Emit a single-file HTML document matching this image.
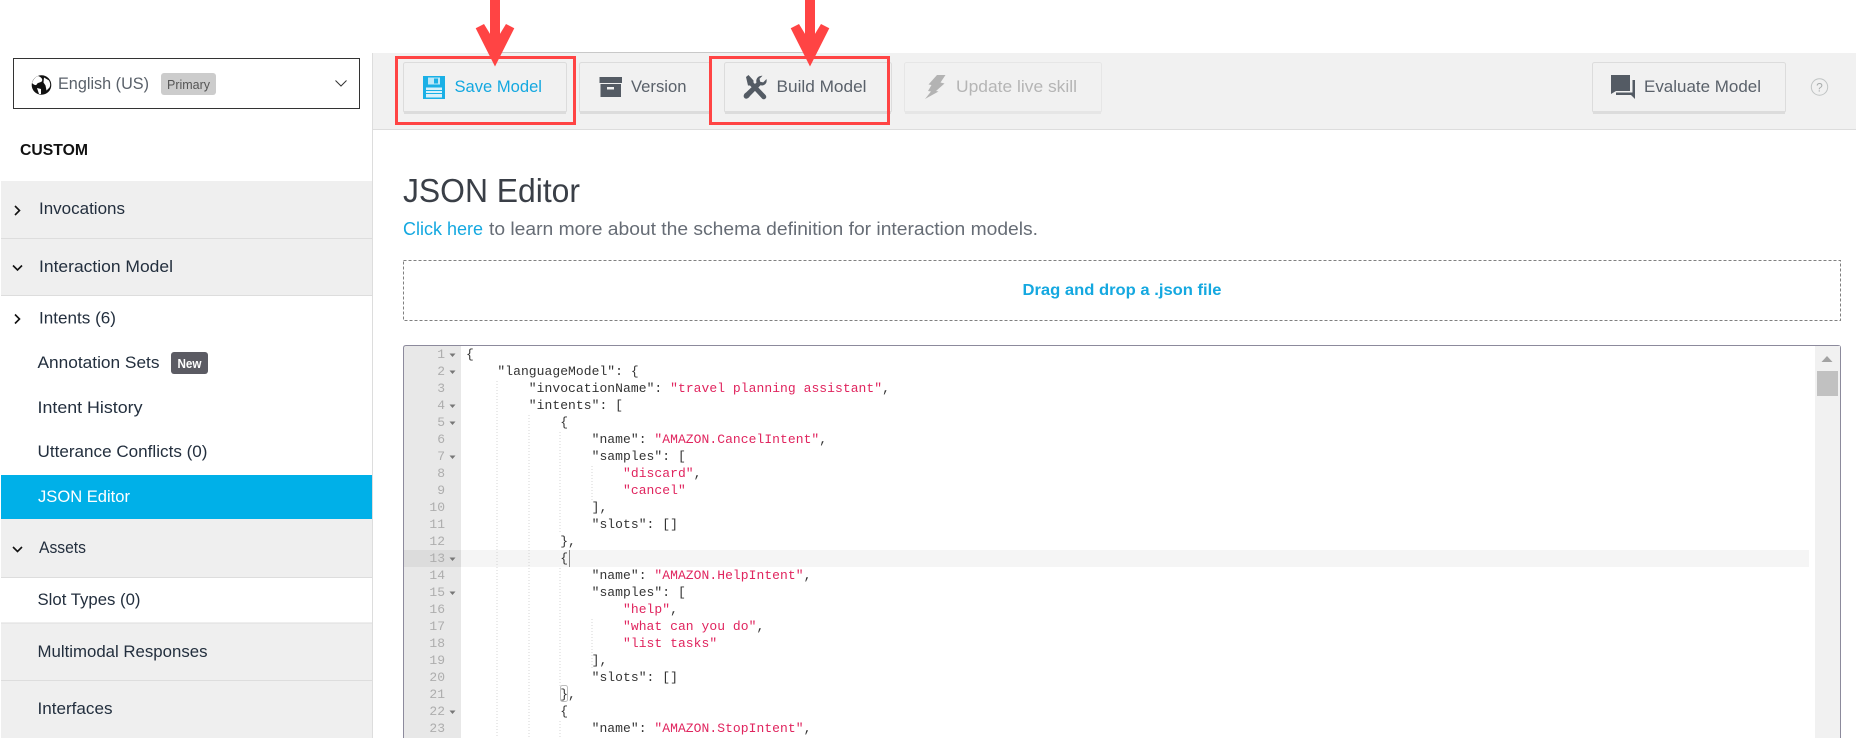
<!DOCTYPE html>
<html lang="en"><head><meta charset="utf-8"><title>JSON Editor</title>
<style>
html,body{margin:0;padding:0;background:#fff;width:1856px;height:738px;overflow:hidden}
svg{display:block}
text{font-family:"Liberation Sans",sans-serif;white-space:pre}
.s{font-size:16.5px;fill:#232f3e}
.b{font-size:16.5px;fill:#5a616a}
.c text,.c{font-family:"Liberation Mono",monospace;font-size:13px;fill:#333;letter-spacing:.05px}
.c .r{fill:#e0245e}
.n{font-family:"Liberation Mono",monospace;font-size:13px;fill:#adadad;text-anchor:end}
</style></head><body>
<svg width="1856" height="738" viewBox="0 0 1856 738" xmlns="http://www.w3.org/2000/svg">
<rect width="1856" height="738" fill="#fff"/>

<!-- sidebar -->
<rect x="372" y="53" width="1" height="685" fill="#ddd"/>
<rect x="13.5" y="58.5" width="346" height="50" fill="#fff" stroke="#333"/>
<circle cx="41.5" cy="85" r="9.8" fill="#111"/>
<path d="M38 76c3 1 5 3 4 5s-4 1-5 3-3 1-5-1c1-3 3-6 6-7zM44 77.500l5 3c1.500 3 1.500 5 .5 7l-3 3-1-5-2-3zM37 88l4 1 0 5-2 0z" fill="#fff"/>
<text class="b" x="58" y="89" textLength="91" lengthAdjust="spacingAndGlyphs">English (US)</text>
<rect x="161" y="73" width="55" height="22" rx="3" fill="#ccc"/>
<text x="167" y="89" font-size="13" fill="#555" textLength="43" lengthAdjust="spacingAndGlyphs">Primary</text>
<path d="M335.500 80.500l5.500 5.500 5.500-5.500" fill="none" stroke="#333" stroke-width="1"/>
<text x="20" y="155" font-size="16" font-weight="700" fill="#111" textLength="68" lengthAdjust="spacingAndGlyphs">CUSTOM</text>

<rect x="1" y="181" width="371" height="57" fill="#efefef"/><rect x="1" y="238" width="371" height="1" fill="#ddd"/>
<path d="M15 206l4.500 4.500-4.500 4.500" fill="none" stroke="#111" stroke-width="1.600"/>
<text class="s" x="39" y="214" textLength="86" lengthAdjust="spacingAndGlyphs">Invocations</text>

<rect x="1" y="239" width="371" height="56" fill="#efefef"/><rect x="1" y="295" width="371" height="1" fill="#ddd"/>
<path d="M13 265.500l4.500 4.500 4.500-4.500" fill="none" stroke="#111" stroke-width="1.600"/>
<text class="s" x="39" y="272" textLength="134" lengthAdjust="spacingAndGlyphs">Interaction Model</text>

<path d="M15 314.500l4.500 4.500-4.500 4.500" fill="none" stroke="#111" stroke-width="1.600"/>
<text class="s" x="39" y="323.500" textLength="77" lengthAdjust="spacingAndGlyphs">Intents (6)</text>
<text class="s" x="37.500" y="368" textLength="122" lengthAdjust="spacingAndGlyphs">Annotation Sets</text>
<rect x="171" y="352" width="37" height="22" rx="3" fill="#5b5b63"/>
<text x="177.500" y="368" font-size="13" font-weight="700" fill="#fff" textLength="24" lengthAdjust="spacingAndGlyphs">New</text>
<text class="s" x="37.500" y="413" textLength="105" lengthAdjust="spacingAndGlyphs">Intent History</text>
<text class="s" x="37.500" y="457" textLength="170" lengthAdjust="spacingAndGlyphs">Utterance Conflicts (0)</text>

<rect x="1" y="475" width="371" height="44" fill="#00b0e8"/>
<text x="38" y="502" font-size="16.500" fill="#fff" textLength="92" lengthAdjust="spacingAndGlyphs">JSON Editor</text>

<rect x="1" y="519" width="371" height="58" fill="#efefef"/><rect x="1" y="577" width="371" height="1" fill="#ddd"/>
<path d="M13 547l4.500 4.500 4.500-4.500" fill="none" stroke="#111" stroke-width="1.600"/>
<text class="s" x="39" y="553" textLength="47" lengthAdjust="spacingAndGlyphs">Assets</text>
<text class="s" x="37.500" y="605" textLength="103" lengthAdjust="spacingAndGlyphs">Slot Types (0)</text>
<rect x="1" y="622.500" width="371" height="1" fill="#ddd"/>
<rect x="1" y="623.500" width="371" height="57" fill="#efefef"/><rect x="1" y="680" width="371" height="1" fill="#ddd"/>
<text class="s" x="37.500" y="657" textLength="170" lengthAdjust="spacingAndGlyphs">Multimodal Responses</text>
<rect x="1" y="681" width="371" height="57" fill="#efefef"/>
<text class="s" x="37.500" y="714" textLength="75" lengthAdjust="spacingAndGlyphs">Interfaces</text>

<!-- toolbar -->
<rect x="373" y="53" width="1483" height="76" fill="#f1f1f1"/>
<rect x="373" y="129" width="1483" height="1" fill="#ddd"/>
<rect x="500" y="52" width="308" height="1" fill="#c8c8c8"/>

<!-- buttons -->
<g fill="#f1f1f1" stroke="#dcdcdc">
<rect x="403.500" y="62.500" width="163" height="50" rx="2"/>
<rect x="579.500" y="62.500" width="132" height="50" rx="2"/>
<rect x="724.500" y="62.500" width="167" height="50" rx="2"/>
<rect x="904.500" y="62.500" width="197" height="50" rx="2" stroke="#e6e6e6"/>
<rect x="1592.500" y="62.500" width="193" height="50" rx="2"/>
</g>
<g fill="#dcdcdc">
<rect x="404" y="111" width="162" height="3"/>
<rect x="580" y="111" width="131" height="3"/>
<rect x="725" y="111" width="166" height="3"/>
<rect x="905" y="111" width="196" height="3" fill="#e6e6e6"/>
<rect x="1593" y="111" width="192" height="3"/>
</g>

<!-- save -->
<path d="M423 76h22v23h-22z" fill="#1ab0e6"/>
<rect x="428" y="77.500" width="12" height="7" fill="#bfe8f7"/><rect x="434" y="78.500" width="4" height="5" fill="#1ab0e6"/>
<rect x="426" y="87.500" width="16" height="10" fill="#d9f1fa"/>
<path d="M426 90.500h16M426 93.500h16" stroke="#1ab0e6" stroke-width="1"/>
<text x="454.500" y="92" font-size="16.500" fill="#14a8e0" textLength="87.500" lengthAdjust="spacingAndGlyphs">Save Model</text>

<!-- version -->
<rect x="599.500" y="77" width="22.500" height="6" fill="#545b64"/>
<rect x="600.500" y="84" width="20.500" height="13" fill="#545b64"/>
<rect x="607" y="87" width="7" height="2.500" fill="#f1f1f1"/>
<text class="b" x="631" y="92" textLength="55.500" lengthAdjust="spacingAndGlyphs">Version</text>

<!-- build -->
<path d="M746 77l2.500-2 5 5.500v2l12 12.500c1 1.500 1 2.500 0 3.500s-2.500 1-3.500 0L750 85.500h-2z" fill="#545b64"/>
<path d="M766.500 79c.6 3-.4 5-2.500 6-1.500.6-2.500.5-3.500.2L750 96c-1.500 2.500-4 3.500-5.500 2-1.500-1.500-1-4 1.500-5.500l10.500-10c-.4-1.200-.4-2.500.3-3.800 1-2 3-3 5.700-3l-3 3 .7 3 3 .7z" fill="#545b64"/>
<text class="b" x="776.500" y="92" textLength="90" lengthAdjust="spacingAndGlyphs">Build Model</text>

<!-- update -->
<path d="M937 75L945.500 75 940.500 82.500 944.500 83.500 936 91 938.500 91.500 925 99 931 91.500 928 91 931.500 85 928.500 84.500z" fill="#b3b3b3"/>
<text x="956" y="92" font-size="16.500" fill="#b5b5b5" textLength="121" lengthAdjust="spacingAndGlyphs">Update live skill</text>

<!-- evaluate -->
<path d="M1611 75h19v16h-14l-5 3z" fill="#545b64"/>
<path d="M1632.500 80h2.500v19l-4-4h-15v-2.500h16.500z" fill="#545b64"/>
<text class="b" x="1644" y="92" textLength="117" lengthAdjust="spacingAndGlyphs">Evaluate Model</text>

<!-- help -->
<circle cx="1819.500" cy="87" r="8.200" fill="none" stroke="#c0c4c4"/>
<text x="1819.500" y="91.500" font-size="12" fill="#a8adad" text-anchor="middle">?</text>

<!-- highlights and arrows -->
<g fill="none" stroke="#ff4444" stroke-width="3">
<rect x="396.500" y="57.500" width="178" height="66"/>
<rect x="710.500" y="57.500" width="178" height="66"/>
</g>
<g fill="#ff4444">
<path d="M490 0h10v35h-.7L506 24l8.300 4.300L495 66.500 475.700 28.300 484 24l6.700 11H490z"/>
<path d="M805 0h10v35h-.7L821 24l8.300 4.300L810 66.500 790.700 28.300 799 24l6.700 11H805z"/>
</g>

<!-- heading -->
<text x="403" y="202" font-size="33" fill="#3a3f47" textLength="177" lengthAdjust="spacingAndGlyphs">JSON Editor</text>
<text x="403" y="235" font-size="18" fill="#14a8e0" textLength="80" lengthAdjust="spacingAndGlyphs">Click here</text>
<text x="489" y="235" font-size="18" fill="#666c75" textLength="549" lengthAdjust="spacingAndGlyphs">to learn more about the schema definition for interaction models.</text>

<!-- drop zone -->
<rect x="403.500" y="260.500" width="1437" height="60" fill="#fff" stroke="#808080" stroke-dasharray="3 2"/>
<text x="1022.500" y="295" font-size="15.500" font-weight="700" fill="#14a8e0" textLength="199" lengthAdjust="spacingAndGlyphs">Drag and drop a .json file</text>

<!-- editor -->
<rect x="404" y="346" width="57" height="392" fill="#e8e8e8"/>
<rect x="404" y="550" width="57" height="17" fill="#dcdcdc"/>
<rect x="461" y="550" width="1348" height="17" fill="#f5f5f5"/>
<path d="M403.500 738V348q0-2.500 2.500-2.500H1838q2.500 0 2.500 2.500V738" fill="none" stroke="#8c8a9c"/>
<rect x="1815" y="346" width="25" height="392" fill="#f1f1f1"/>
<path d="M1827 356l5.500 6h-11z" fill="#a3a3a3"/>
<rect x="1817" y="371" width="21" height="25" fill="#c1c1c1"/>

<!-- indent guides -->
<g stroke="#d4d4d4" stroke-dasharray="1 2" fill="none">
<path d="M497 381V738M529 415V738"/>
<path d="M560 432V534M560 568V687M560 721V738"/>
<path d="M592 466V500M592 619V670"/>
</g>

<!-- gutter numbers -->
<g class="n" transform="translate(0,-1)">
<text class="n" x="445" y="359">1</text><text class="n" x="445" y="376">2</text><text class="n" x="445" y="393">3</text><text class="n" x="445" y="410">4</text><text class="n" x="445" y="427">5</text><text class="n" x="445" y="444">6</text><text class="n" x="445" y="461">7</text><text class="n" x="445" y="478">8</text><text class="n" x="445" y="495">9</text><text class="n" x="445" y="512">10</text><text class="n" x="445" y="529">11</text><text class="n" x="445" y="546">12</text><text class="n" x="445" y="563">13</text><text class="n" x="445" y="580">14</text><text class="n" x="445" y="597">15</text><text class="n" x="445" y="614">16</text><text class="n" x="445" y="631">17</text><text class="n" x="445" y="648">18</text><text class="n" x="445" y="665">19</text><text class="n" x="445" y="682">20</text><text class="n" x="445" y="699">21</text><text class="n" x="445" y="716">22</text><text class="n" x="445" y="733">23</text>
</g>
<g fill="#777">
<path d="M449.500 353.500h6l-3 3.500z"/><path d="M449.500 370.500h6l-3 3.500z"/><path d="M449.500 404.500h6l-3 3.500z"/><path d="M449.500 421.500h6l-3 3.500z"/><path d="M449.500 455.500h6l-3 3.500z"/><path d="M449.500 557.500h6l-3 3.500z"/><path d="M449.500 591.500h6l-3 3.500z"/><path d="M449.500 710.500h6l-3 3.500z"/>
</g>

<!-- code -->
<g class="c" transform="translate(0,-1)">
<text x="466" y="359">{</text>
<text x="497.400" y="376">"languageModel": {</text>
<text x="528.800" y="393">"invocationName": <tspan class="r">"travel planning assistant"</tspan>,</text>
<text x="528.800" y="410">"intents": [</text>
<text x="560.200" y="427">{</text>
<text x="591.600" y="444">"name": <tspan class="r">"AMAZON.CancelIntent"</tspan>,</text>
<text x="591.600" y="461">"samples": [</text>
<text x="623" y="478"><tspan class="r">"discard"</tspan>,</text>
<text x="623" y="495"><tspan class="r">"cancel"</tspan></text>
<text x="591.600" y="512">],</text>
<text x="591.600" y="529">"slots": []</text>
<text x="560.200" y="546">},</text>
<text x="560.200" y="563">{</text>
<text x="591.600" y="580">"name": <tspan class="r">"AMAZON.HelpIntent"</tspan>,</text>
<text x="591.600" y="597">"samples": [</text>
<text x="623" y="614"><tspan class="r">"help"</tspan>,</text>
<text x="623" y="631"><tspan class="r">"what can you do"</tspan>,</text>
<text x="623" y="648"><tspan class="r">"list tasks"</tspan></text>
<text x="591.600" y="665">],</text>
<text x="591.600" y="682">"slots": []</text>
<text x="560.200" y="699">},</text>
<text x="560.200" y="716">{</text>
<text x="591.600" y="733">"name": <tspan class="r">"AMAZON.StopIntent"</tspan>,</text>
</g>
<rect x="569" y="550" width="1" height="17" fill="#888"/>
<rect x="560.500" y="685.500" width="7" height="16" rx="2" fill="none" stroke="#bdbdbd"/>
</svg>
</body></html>
